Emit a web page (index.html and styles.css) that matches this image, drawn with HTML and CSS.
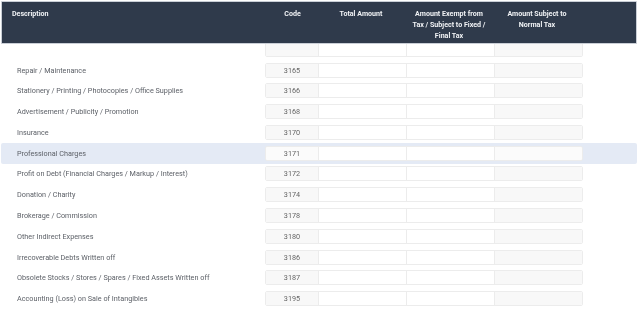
FILE: index.html
```html
<!DOCTYPE html>
<html>
<head>
<meta charset="utf-8">
<link rel="stylesheet" href="styles.css">
</head>
<body>
<div class="table">
  <div class="thead">
    <div class="th desc">Description</div>
    <div class="th code">Code</div>
    <div class="th amt">Total Amount</div>
    <div class="th amt">Amount Exempt from<br>Tax / Subject to Fixed /<br>Final Tax</div>
    <div class="th amt">Amount Subject to<br>Normal Tax</div>
  </div>
  <div class="tbody">
    <div class="row peek"><div class="desc"></div><div class="group"><div class="cell code"></div><div class="cell inp"></div><div class="cell inp"></div><div class="cell dis"></div></div></div>
    <div class="row"><div class="desc">Repair / Maintenance</div><div class="group"><div class="cell code">3165</div><div class="cell inp"></div><div class="cell inp"></div><div class="cell dis"></div></div></div>
    <div class="row"><div class="desc">Stationery / Printing / Photocopies / Office Supplies</div><div class="group"><div class="cell code">3166</div><div class="cell inp"></div><div class="cell inp"></div><div class="cell dis"></div></div></div>
    <div class="row"><div class="desc">Advertisement / Publicity / Promotion</div><div class="group"><div class="cell code">3168</div><div class="cell inp"></div><div class="cell inp"></div><div class="cell dis"></div></div></div>
    <div class="row"><div class="desc">Insurance</div><div class="group"><div class="cell code">3170</div><div class="cell inp"></div><div class="cell inp"></div><div class="cell dis"></div></div></div>
    <div class="row active"><div class="desc">Professional Charges</div><div class="group"><div class="cell code">3171</div><div class="cell inp"></div><div class="cell inp"></div><div class="cell dis"></div></div></div>
    <div class="row"><div class="desc">Profit on Debt (Financial Charges / Markup / Interest)</div><div class="group"><div class="cell code">3172</div><div class="cell inp"></div><div class="cell inp"></div><div class="cell dis"></div></div></div>
    <div class="row"><div class="desc">Donation / Charity</div><div class="group"><div class="cell code">3174</div><div class="cell inp"></div><div class="cell inp"></div><div class="cell dis"></div></div></div>
    <div class="row"><div class="desc">Brokerage / Commission</div><div class="group"><div class="cell code">3178</div><div class="cell inp"></div><div class="cell inp"></div><div class="cell dis"></div></div></div>
    <div class="row"><div class="desc">Other Indirect Expenses</div><div class="group"><div class="cell code">3180</div><div class="cell inp"></div><div class="cell inp"></div><div class="cell dis"></div></div></div>
    <div class="row"><div class="desc">Irrecoverable Debts Written off</div><div class="group"><div class="cell code">3186</div><div class="cell inp"></div><div class="cell inp"></div><div class="cell dis"></div></div></div>
    <div class="row"><div class="desc">Obsolete Stocks / Stores / Spares / Fixed Assets Written off</div><div class="group"><div class="cell code">3187</div><div class="cell inp"></div><div class="cell inp"></div><div class="cell dis"></div></div></div>
    <div class="row"><div class="desc">Accounting (Loss) on Sale of Intangibles</div><div class="group"><div class="cell code">3195</div><div class="cell inp"></div><div class="cell inp"></div><div class="cell dis"></div></div></div>
  </div>
</div>
</body>
</html>
```
FILE: styles.css
```css
html, body {
  margin: 0;
  padding: 0;
  background: #ffffff;
  font-family: Roboto, "Liberation Sans", sans-serif;
  height: 310px;
  overflow: hidden;
}
.table {
  width: 636px;
  margin-left: 1px;
  padding-top: 1px;
}
.thead {
  display: flex;
  align-items: flex-start;
  height: 43px;
  box-sizing: border-box;
  background: #2f3a4b;
  border: 1px solid #c9ced6;
  border-radius: 1px;
  color: #f0f2f5;
  font-weight: 700;
  font-size: 7.1px;
  line-height: 11px;
  padding-top: 6px;
  will-change: transform;
}
.th.desc {
  width: 263px;
  padding-left: 10px;
  box-sizing: border-box;
}
.th.code {
  width: 52px;
  text-align: center;
  padding-left: 3px;
  box-sizing: border-box;
}
.th.amt {
  width: 88px;
  text-align: center;
}
.tbody {
  height: 266px;
  overflow: hidden;
  will-change: transform;
}
.row {
  display: flex;
  align-items: center;
  height: 20.8px;
  font-size: 7.25px;
  color: #5b5f66;
  border-radius: 2px;
}
.row.peek {
  margin-top: -5.2px;
}
.row.active {
  background: #e4eaf5;
}
.row .desc {
  width: 264px;
  padding-left: 16px;
  box-sizing: border-box;
  white-space: nowrap;
}
.group {
  display: flex;
  height: 15px;
  border: 1px solid #ececec;
  border-radius: 2px;
  box-sizing: border-box;
  overflow: hidden;
}
.cell {
  height: 100%;
  box-sizing: border-box;
  display: flex;
  align-items: center;
  justify-content: center;
}
.cell + .cell {
  border-left: 1px solid #ececec;
}
.cell.code {
  width: 52px;
  background: #f8f8f8;
  color: #666;
}
.cell.inp {
  width: 88px;
  background: #ffffff;
}
.cell.dis {
  width: 88px;
  background: #f8f8f8;
}
.row.active .cell.code,
.row.active .cell.dis {
  background: #fbfbfb;
}
```
